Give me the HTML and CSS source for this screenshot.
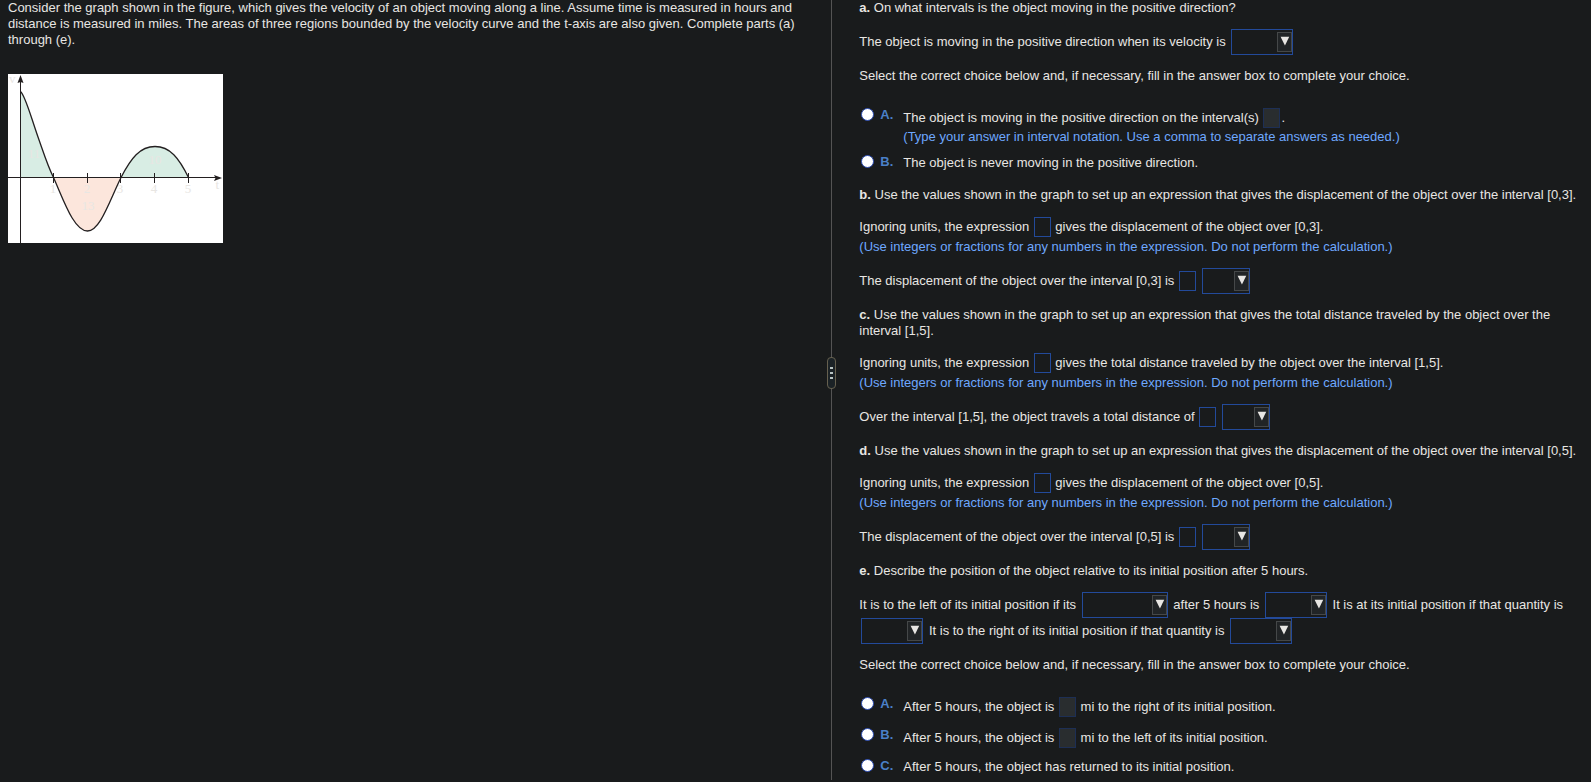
FILE: index.html
```
<!DOCTYPE html>
<html lang="en">
<head>
<meta charset="utf-8">
<title>Velocity and displacement</title>
<link rel="stylesheet" href="styles.css">
</head>
<body>
<main class="exercise">
  <section class="prompt">
    <p class="text">Consider the graph shown in the figure, which gives the velocity of an object moving along a line. Assume time is measured in hours and distance is measured in miles. The areas of three regions bounded by the velocity curve and the t-axis are also given. Complete parts (a) through (e).</p>
    <svg class="graph" viewBox="0 0 215 169" role="img" aria-label="Velocity curve with areas 11, 13 and 10">
      <rect width="215" height="169" fill="#fff"/>
      <path d="M12.500 17.500C17 21 22 40 30 63C36 80 40 93 45.500 103.500H12.500Z" fill="#d8ede4"/>
      <path d="M45.500 103.500C56 127 66 157 79.500 157C92 157 101 128 113 103.500Z" fill="#fce6dc"/>
      <path d="M113 103.500C123 84 132 72.500 147 72.500C162 72.500 171 84 180.500 103.500Z" fill="#d8ede4"/>
      <g class="graph-label">
        <text x="1" y="9">v</text><text x="211" y="115" text-anchor="end">t</text>
        <text x="45" y="119" text-anchor="middle">1</text><text x="79" y="119" text-anchor="middle">2</text><text x="112" y="119" text-anchor="middle">3</text><text x="146" y="119" text-anchor="middle">4</text><text x="180" y="119" text-anchor="middle">5</text>
        <text x="26" y="84" text-anchor="middle">11</text><text x="80" y="136" text-anchor="middle">13</text><text x="147" y="90" text-anchor="middle">10</text>
      </g>
      <g fill="none" stroke="#231f20">
        <path d="M12.500 169V6M0 103.500H208M45.500 99V109M79.500 99V109M112.500 99V109M146.500 99V109M180.500 99V109"/>
        <path d="M12.500 17.500C17 21 22 40 30 63C36 80 40 93 45.500 103.500C56 127 66 157 79.500 157C92 157 101 128 113 103.500C123 84 132 72.500 147 72.500C162 72.500 171 84 180.500 103.500" stroke-width="1.300"/>
      </g>
      <path d="M12.500 1L15.500 9L12.500 8L9.500 9ZM214 104L206 107L207.500 104L206 101Z" fill="#231f20"/>
    </svg>
  </section>

  <div class="divider"><button class="handle" type="button" aria-label="Resize panels"><i></i><i></i><i></i></button></div>

  <form class="parts">
    <p class="text"><b>a.</b> On what intervals is the object moving in the positive direction?</p>
    <p class="picks">The object is moving in the positive direction when its velocity is <span class="pick"><select aria-label="Velocity sign"><option></option></select><svg class="arrow" viewBox="0 0 15 20"><path d="M3 4H13L8 14Z"/></svg></span></p>
    <p class="text">Select the correct choice below and, if necessary, fill in the answer box to complete your choice.</p>
    <div class="choices">
      <div class="choice">
        <input type="radio" name="a" id="a1"><label class="letter" for="a1">A.</label>
        <div class="body"><p class="fill">The object is moving in the positive direction on the interval(s) <input class="box" type="text" aria-label="Intervals" disabled>.</p><p class="hint">(Type your answer in interval notation. Use a comma to separate answers as needed.)</p></div>
      </div>
      <div class="choice">
        <input type="radio" name="a" id="a2"><label class="letter" for="a2">B.</label>
        <div class="body"><p class="plain">The object is never moving in the positive direction.</p></div>
      </div>
    </div>

    <p class="text"><b>b.</b> Use the values shown in the graph to set up an expression that gives the displacement of the object over the interval [0,3].</p>
    <div class="entry"><p class="fill">Ignoring units, the expression <input class="box" type="text" aria-label="Displacement expression over [0,3]"> gives the displacement of the object over [0,3].</p><p class="hint">(Use integers or fractions for any numbers in the expression. Do not perform the calculation.)</p></div>
    <p class="picks">The displacement of the object over the interval [0,3] is <input class="box" type="text" aria-label="Displacement over [0,3]"> <span class="pick pick-small"><select aria-label="Units for displacement over [0,3]"><option></option></select><svg class="arrow" viewBox="0 0 15 20"><path d="M3 4H13L8 14Z"/></svg></span></p>

    <p class="text"><b>c.</b> Use the values shown in the graph to set up an expression that gives the total distance traveled by the object over the interval [1,5].</p>
    <div class="entry"><p class="fill">Ignoring units, the expression <input class="box" type="text" aria-label="Distance expression"> gives the total distance traveled by the object over the interval [1,5].</p><p class="hint">(Use integers or fractions for any numbers in the expression. Do not perform the calculation.)</p></div>
    <p class="picks">Over the interval [1,5], the object travels a total distance of <input class="box" type="text" aria-label="Total distance"> <span class="pick pick-small"><select aria-label="Units for total distance"><option></option></select><svg class="arrow" viewBox="0 0 15 20"><path d="M3 4H13L8 14Z"/></svg></span></p>

    <p class="text"><b>d.</b> Use the values shown in the graph to set up an expression that gives the displacement of the object over the interval [0,5].</p>
    <div class="entry"><p class="fill">Ignoring units, the expression <input class="box" type="text" aria-label="Displacement expression over [0,5]"> gives the displacement of the object over [0,5].</p><p class="hint">(Use integers or fractions for any numbers in the expression. Do not perform the calculation.)</p></div>
    <p class="picks">The displacement of the object over the interval [0,5] is <input class="box" type="text" aria-label="Displacement over [0,5]"> <span class="pick pick-small"><select aria-label="Units for displacement over [0,5]"><option></option></select><svg class="arrow" viewBox="0 0 15 20"><path d="M3 4H13L8 14Z"/></svg></span></p>

    <p class="text"><b>e.</b> Describe the position of the object relative to its initial position after 5 hours.</p>
    <p class="picks">It is to the left of its initial position if its <span class="pick pick-wide"><select aria-label="Quantity"><option></option></select><svg class="arrow" viewBox="0 0 15 20"><path d="M3 4H13L8 14Z"/></svg></span> after 5 hours is <span class="pick"><select aria-label="Sign when left"><option></option></select><svg class="arrow" viewBox="0 0 15 20"><path d="M3 4H13L8 14Z"/></svg></span> It is at its initial position if that quantity is <span class="pick"><select aria-label="Sign when at start"><option></option></select><svg class="arrow" viewBox="0 0 15 20"><path d="M3 4H13L8 14Z"/></svg></span> It is to the right of its initial position if that quantity is <span class="pick"><select aria-label="Sign when right"><option></option></select><svg class="arrow" viewBox="0 0 15 20"><path d="M3 4H13L8 14Z"/></svg></span></p>
    <p class="text">Select the correct choice below and, if necessary, fill in the answer box to complete your choice.</p>
    <div class="choices">
      <div class="choice">
        <input type="radio" name="e" id="e1"><label class="letter" for="e1">A.</label>
        <div class="body"><p class="fill">After 5 hours, the object is <input class="box" type="text" aria-label="Miles to the right" disabled> mi to the right of its initial position.</p></div>
      </div>
      <div class="choice">
        <input type="radio" name="e" id="e2"><label class="letter" for="e2">B.</label>
        <div class="body"><p class="fill">After 5 hours, the object is <input class="box" type="text" aria-label="Miles to the left" disabled> mi to the left of its initial position.</p></div>
      </div>
      <div class="choice">
        <input type="radio" name="e" id="e3"><label class="letter" for="e3">C.</label>
        <div class="body"><p class="plain">After 5 hours, the object has returned to its initial position.</p></div>
      </div>
    </div>
  </form>
</main>
</body>
</html>
```
FILE: styles.css
```
* { box-sizing: border-box; }
body {
  margin: 0;
  background: #191b1c;
  color: #e8e6e3;
  font: 13px/16px "Liberation Sans", Arial, sans-serif;
}
p { margin: 0; }
.exercise {
  display: grid;
  grid-template-columns: 52% 9px 1fr;
  min-height: 100vh;
}
.prompt { padding: 0 32px 0 8px; }
.graph { display: block; width: 215px; margin-top: 26px; overflow: visible; }
.graph-label { font: 13px "Liberation Serif", serif; fill: #e8e6e3; }

.divider {
  display: flex;
  align-items: center;
  justify-content: center;
  margin-bottom: 2px;
  background: linear-gradient(#545454, #545454) center / 1px 100% no-repeat;
}
.handle {
  display: flex;
  flex-direction: column;
  align-items: center;
  justify-content: center;
  gap: 3px;
  width: 9px;
  height: 32px;
  margin-bottom: 34px;
  padding: 0;
  border: 1px solid #66604f;
  border-radius: 4px;
  background: #1b2226;
}
.handle i { width: 3px; height: 2px; background: #b9c4c4; }

.parts { padding: 0 12px 0 23px; }
.parts > .text, .picks { margin-top: 13px; }
.parts > .text:first-child { margin-top: 0; }
.picks { line-height: 26px; }
.entry { margin-top: 14px; }
.fill { padding-bottom: 1px; line-height: 20px; }
.entry .fill { padding-bottom: 2px; }
.hint { color: #6ea8ff; }

.box {
  width: 17px;
  height: 20px;
  margin: 0 1px;
  padding: 0;
  border: 1px solid #234a9a;
  border-radius: 0;
  background: transparent;
  color: inherit;
  font: inherit;
  vertical-align: top;
}
.picks .box { margin: 3px 0 0 1px; }
.box:disabled { border-color: #1d2f55; background: #292d2f; }

.pick {
  display: inline-block;
  position: relative;
  width: 62px;
  height: 26px;
  margin: 0 2px;
  vertical-align: top;
}
.pick-small { width: 48px; }
.pick-wide { width: 86px; }
.pick select {
  display: block;
  width: 100%;
  height: 100%;
  margin: 0;
  padding: 0 16px 0 2px;
  border: 1px solid #234a9a;
  border-radius: 0;
  background: transparent;
  color: inherit;
  font: inherit;
  appearance: none;
}
.arrow {
  position: absolute;
  top: 3px;
  right: 1px;
  width: 15px;
  height: 20px;
  border: 1px solid #454849;
  background: #212426;
  fill: #e8e6e3;
  pointer-events: none;
}

.choices { display: grid; gap: 10px; margin: 24px 0 16px; }
.parts > .choices:last-child { margin-bottom: 0; }
.choice { display: flex; align-items: flex-start; }
.choice input[type="radio"] {
  appearance: none;
  width: 13px;
  height: 13px;
  margin: 0 6px 0 2px;
  border: 1px solid #2b4bb0;
  border-radius: 50%;
  background: #fff;
}
.letter { width: 23px; color: #4a80c8; font-weight: bold; line-height: 14px; }
```
